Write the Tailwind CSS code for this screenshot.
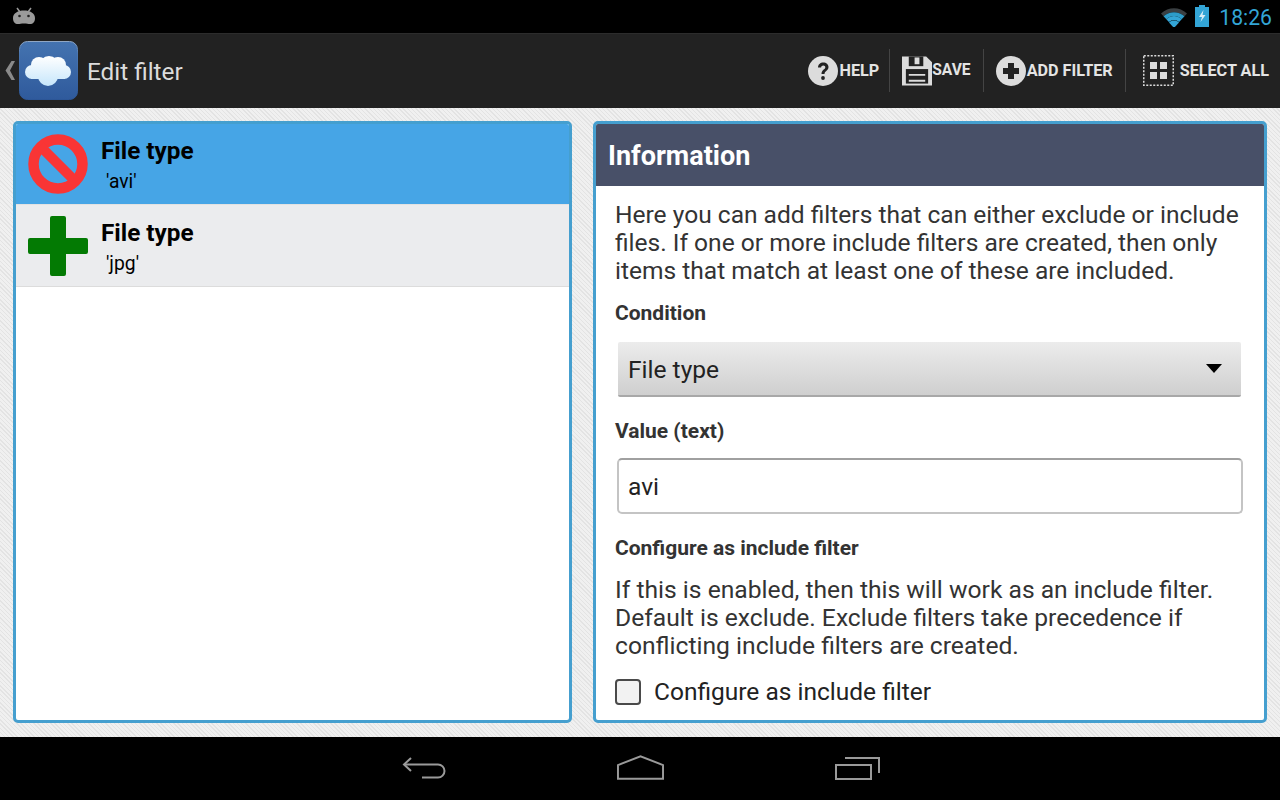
<!DOCTYPE html>
<html lang="en">
<head>
    <meta charset="UTF-8">
    <title>Edit filter</title>
    <script src="https://cdn.jsdelivr.net/npm/@tailwindcss/browser@4"></script>
</head>
<body class="w-[1280px] h-[800px] overflow-hidden flex flex-col font-['Roboto',sans-serif] bg-black">
    <!-- Status bar -->
    <div class="h-[33px] bg-black flex items-center justify-between shrink-0">
        <svg class="ml-[12px] mt-[-1px]" width="24" height="18" viewBox="0 0 24 18">
            <path d="M5 1l3 4M19 1l-3 4" stroke="#9a9a9a" stroke-width="1.5"/>
            <path d="M1 11C1 6 6 3.500 12 3.500S23 6 23 11c0 4-2 6-5 6-2 0-3-.5-6-.5s-4 .5-6 .5c-3 0-5-2-5-6z" fill="#9a9a9a"/>
            <circle cx="7.500" cy="9" r="1.300" fill="#222"/>
            <circle cx="16.500" cy="9" r="1.300" fill="#222"/>
        </svg>
        <div class="flex items-center text-[#33a5d6] mt-[-1px]">
            <svg width="28" height="22" viewBox="0 0 28 22">
                <path d="M1 8.500C8.500 1.500 19.500 1.500 27 8.500l-2.500 2.800C18 6 10 6 3.500 11.300z" fill="#3a3f42"/>
                <path d="M3.500 11.300C10 6 18 6 24.500 11.300l-2.800 3C16.500 10 11.500 10 6.300 14.300z" fill="#2d9cc9"/>
                <path d="M6.300 14.300c5.200-4.300 10.200-4.300 15.400 0l-2.600 2.800c-3.300-2.700-6.900-2.700-10.200 0z" fill="#33a5d6"/>
                <path d="M9 17.500c3.200-2.600 6.800-2.600 10 0L14 23z" fill="#33a5d6"/>
            </svg>
            <svg class="ml-[7px]" width="14" height="22" viewBox="0 0 14 22">
                <path d="M4 0h6v2h4v20H0V2h4z" fill="#33a5d6"/>
                <path d="M8.500 5L4 12h3l-1.500 5L10.500 10h-3z" fill="#d8eef7"/>
            </svg>
            <span class="ml-[10px] mr-[8px] mt-[3px] text-[21.2px] leading-none">18:26</span>
        </div>
    </div>

    <!-- Action bar -->
    <div class="h-[75px] bg-[#222222] border-t border-[#2c2c2c] flex items-center shrink-0">
        <svg class="ml-[5px] mt-[-2px]" width="11" height="19" viewBox="0 0 11 19">
            <path d="M10 0L5 9.500 10 19H6.500L0.500 9.500 6.500 0z" fill="#8a8a8a"/>
        </svg>
        <svg class="ml-[3px] mt-[-1px]" width="59" height="59" viewBox="0 0 59 59">
            <defs>
                <linearGradient id="tile" x1="0" y1="0" x2="0" y2="1">
                    <stop offset="0" stop-color="#4473b0"/>
                    <stop offset="1" stop-color="#2f5a9c"/>
                </linearGradient>
                <linearGradient id="rim" x1="0" y1="0" x2="0" y2="1">
                    <stop offset="0" stop-color="#8fa6c4"/>
                    <stop offset="0.2" stop-color="#4a77b2"/>
                    <stop offset="1" stop-color="#2c5697"/>
                </linearGradient>
                <linearGradient id="cloud" gradientUnits="userSpaceOnUse" x1="0" y1="15" x2="0" y2="45">
                    <stop offset="0" stop-color="#ffffff"/>
                    <stop offset="1" stop-color="#c6e6fb"/>
                </linearGradient>
            </defs>
            <rect x="0.500" y="0.500" width="58" height="58" rx="8" fill="url(#tile)" stroke="url(#rim)"/>
            <g fill="url(#cloud)">
                <circle cx="13" cy="31" r="7"/>
                <circle cx="20" cy="24" r="8"/>
                <circle cx="30" cy="25" r="10"/>
                <circle cx="39" cy="24" r="8"/>
                <circle cx="45" cy="31" r="7"/>
                <circle cx="29" cy="35" r="10"/>
                <rect x="12" y="26" width="34" height="12"/>
            </g>
        </svg>
        <span class="ml-[9px] mt-[2px] text-[24.3px] text-[#dcdcdc] leading-none">Edit filter</span>

        <div class="ml-auto flex items-center h-[43px] mt-[-1px] text-[#e4e4e4] font-bold text-[16.2px] leading-none">
            <div class="flex items-center pr-[10px]">
                <svg width="30" height="30" viewBox="0 0 30 30">
                    <circle cx="15" cy="15" r="15" fill="#dcdcdc"/>
                    <path d="M10 11.500c0-3 2.300-5 5.300-5s5.200 1.800 5.200 4.500c0 3.800-4 3.800-4 7h-3c0-4.500 3.800-4.500 3.800-6.800 0-1-.8-1.800-2-1.800s-2.100.9-2.200 2.100z" fill="#222"/>
                    <circle cx="15" cy="22" r="1.900" fill="#222"/>
                </svg>
                <span class="ml-[1px] mt-[1px]">HELP</span>
            </div>
            <div class="w-px h-full bg-[#444]"></div>
            <div class="flex items-center pl-[12px] pr-[12px]">
                <svg width="30" height="30" viewBox="0 0 31 30">
                    <path d="M0 0h25l6 6v24H0z" fill="#dcdcdc"/>
                    <path d="M7 0h15v10H7z" fill="#222"/>
                    <path d="M13 1h5v7h-5z" fill="#dcdcdc"/>
                    <path d="M4 13h23v15H4z" fill="#222"/>
                    <path d="M7 18h17v2H7zM7 24h17v2H7z" fill="#dcdcdc"/>
                </svg>
                <span class="mt-[1px] text-[15.6px]">SAVE</span>
            </div>
            <div class="w-px h-full bg-[#444]"></div>
            <div class="flex items-center pl-[12px] pr-[12px]">
                <svg width="30" height="30" viewBox="0 0 30 30">
                    <circle cx="15" cy="15" r="15" fill="#dcdcdc"/>
                    <path d="M12 7h6v5h5v6h-5v5h-6v-5H7v-6h5z" fill="#222"/>
                </svg>
                <span class="ml-[1px] mt-[1px]">ADD FILTER</span>
            </div>
            <div class="w-px h-full bg-[#444]"></div>
            <div class="flex items-center pl-[17px] pr-[11px]">
                <svg width="31" height="31" viewBox="0 0 31 31">
                    <rect x="0.750" y="0.750" width="29.500" height="29.500" fill="none" stroke="#dcdcdc" stroke-width="1.500" stroke-dasharray="2 1.500"/>
                    <path d="M7 7h7v7H7zM17 7h7v7h-7zM7 17h7v7H7zM17 17h7v7h-7z" fill="#dcdcdc"/>
                </svg>
                <span class="ml-[6px] mt-[1px]">SELECT ALL</span>
            </div>
        </div>
    </div>

    <!-- Main -->
    <div class="h-[629px] shrink-0 flex gap-[21px] pl-[13px] pr-[13px] pt-[13px] pb-[14px] bg-[#ececec] bg-[repeating-linear-gradient(45deg,#e3e3e3_0px,#e3e3e3_1px,#f0f0f0_1px,#f0f0f0_3px)]">
        <!-- Filter list -->
        <div class="w-[559px] bg-white border-[3px] border-[#459fcf] rounded-[5px] overflow-hidden">
            <div class="h-[81px] bg-[#46a5e6] border-b border-[#e2e2e2] flex items-center pl-[11px]">
                <svg width="62" height="62" viewBox="0 0 62 62">
                    <circle cx="31" cy="31" r="24.500" fill="none" stroke="#f93535" stroke-width="10.500"/>
                    <path d="M13 13L49 49" stroke="#f93535" stroke-width="10"/>
                </svg>
                <div class="ml-[12px] mt-[3px]">
                    <div class="text-[24.3px] font-bold text-black leading-[30px]">File type</div>
                    <div class="ml-[5px] mt-[2px] text-[19.3px] text-black leading-[27px]">'avi'</div>
                </div>
            </div>
            <div class="h-[82px] bg-[#ebecee] border-b border-[#dcdcdc] flex items-center pl-[12px]">
                <svg width="60" height="60" viewBox="0 0 60 60">
                    <path d="M22 2a2 2 0 0 1 2-2h12a2 2 0 0 1 2 2v20h20a2 2 0 0 1 2 2v12a2 2 0 0 1-2 2H38v20a2 2 0 0 1-2 2H24a2 2 0 0 1-2-2V38H2a2 2 0 0 1-2-2V24a2 2 0 0 1 2-2h20z" fill="#037a03"/>
                </svg>
                <div class="ml-[13px] mt-[3px]">
                    <div class="text-[24.3px] font-bold text-black leading-[30px]">File type</div>
                    <div class="ml-[5px] mt-[2px] text-[19.3px] text-black leading-[27px]">'jpg'</div>
                </div>
            </div>
        </div>

        <!-- Information panel -->
        <div class="w-[674px] bg-white border-[3px] border-[#459fcf] rounded-[5px] overflow-hidden text-[#333333]">
            <div class="h-[62px] bg-[#485068] flex items-center pl-[12px] pt-[3px] text-[27px] font-bold text-white leading-none">Information</div>
            <div class="pl-[19px] pr-[20px] pt-[15px]">
                <p class="text-[24.55px] leading-[28px]">Here you can add filters that can either exclude or include files. If one or more include filters are created, then only items that match at least one of these are included.</p>
                <div class="mt-[14px] text-[21px] font-bold leading-[28px]">Condition</div>
                <div class="mt-[15px] ml-[3px] w-[623px] h-[55px] rounded-[2px] border-b-2 border-[#a8a8a8] bg-[linear-gradient(to_bottom,#ececec,#cfcfcf)] flex items-center justify-between pl-[10px] pr-[19px]">
                    <span class="pt-[4px] text-[24.55px] text-[#222] leading-none">File type</span>
                    <svg width="16" height="9" viewBox="0 0 16 9"><path d="M0 0h16L8 9z" fill="#000"/></svg>
                </div>
                <div class="mt-[20px] text-[21px] font-bold leading-[28px]">Value (text)</div>
                <div class="mt-[13px] ml-[2px] w-[626px] h-[56px] rounded-[5px] border-2 border-[#c4c4c4] border-t-[#a0a0a0] flex items-center pl-[9px] pt-[3px] text-[24.55px] text-[#222] leading-none">avi</div>
                <div class="mt-[20px] text-[21px] font-bold leading-[28px]">Configure as include filter</div>
                <p class="mt-[14px] text-[24.65px] leading-[28px]">If this is enabled, then this will work as an include filter. Default is exclude. Exclude filters take precedence if conflicting include filters are created.</p>
                <div class="mt-[19px] flex items-center">
                    <div class="w-[26px] h-[26px] rounded-[4px] border-2 border-[#4a4a4a] bg-[#f2f2f2]"></div>
                    <span class="ml-[13px] pt-[1px] text-[24.5px] text-[#222] leading-none">Configure as include filter</span>
                </div>
            </div>
        </div>
    </div>

    <!-- Navigation bar -->
    <div class="h-[63px] bg-black flex items-center justify-center shrink-0 gap-[171px] pb-[2px]">
        <svg class="ml-[1px]" width="44" height="24" viewBox="0 0 44 24" fill="none" stroke="#9a9a9a" stroke-width="2">
            <path d="M9 2L2 8.500l7 6.500"/>
            <path d="M2 8.500h34a6.500 6.500 0 0 1 0 13H20"/>
        </svg>
        <svg width="47" height="25" viewBox="0 0 48 25" fill="none" stroke="#9a9a9a" stroke-width="2">
            <path d="M1 10L24 1l23 9v14H1z"/>
        </svg>
        <svg width="45" height="24" viewBox="0 0 45 24" fill="none" stroke="#9a9a9a" stroke-width="2">
            <path d="M1 9h35v14H1z"/>
            <path d="M10 2h34v15"/>
        </svg>
    </div>
</body>
</html>
